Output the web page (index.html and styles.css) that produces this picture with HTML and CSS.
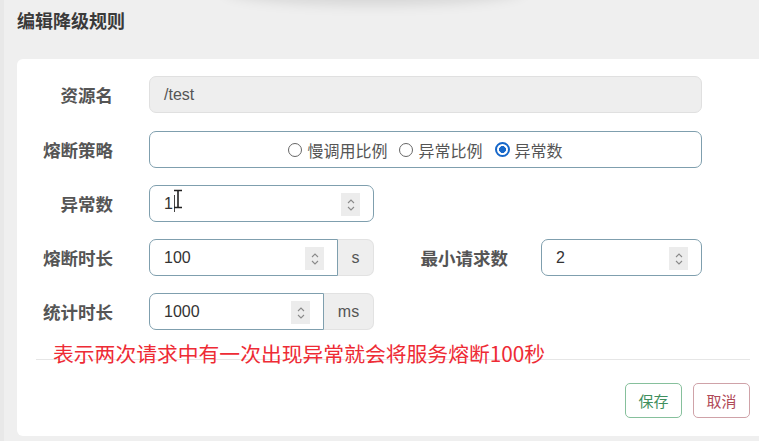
FILE: index.html
```html
<!DOCTYPE html>
<html lang="zh">
<head>
<meta charset="utf-8">
<link rel="stylesheet" href="styles.css">
</head>
<body>
<div class="page">
  <div class="topshade"></div>
  <h2 class="title">编辑降级规则</h2>
  <div class="card">
    <div class="form">
      <div class="row first">
        <label class="lbl">资源名</label>
        <div class="inp disabled full"><span class="val muted">/test</span></div>
      </div>
      <div class="row">
        <label class="lbl">熔断策略</label>
        <div class="inp full radios">
          <span class="radio"><span class="dot"></span>慢调用比例</span>
          <span class="radio"><span class="dot"></span>异常比例</span>
          <span class="radio on"><span class="dot"></span>异常数</span>
        </div>
      </div>
      <div class="row">
        <label class="lbl">异常数</label>
        <div class="inp half">
          <span class="val">1<span class="caret"></span></span>
          <svg class="ibeam" width="10" height="20" viewBox="0 0 10 20"><path d="M1 1.5h8M1 18.5h8M5 1.5v17" stroke="#222" stroke-width="1.6" fill="none"/></svg>
          <span class="spin"><svg width="10" height="16" viewBox="0 0 10 16"><path d="M2 6l3-3 3 3M2 10l3 3 3-3" stroke="#8a8a8a" stroke-width="1.1" fill="none"/></svg></span>
        </div>
      </div>
      <div class="row">
        <label class="lbl">熔断时长</label>
        <div class="group g-s">
          <div class="inp grp"><span class="val">100</span>
            <span class="spin"><svg width="10" height="16" viewBox="0 0 10 16"><path d="M2 6l3-3 3 3M2 10l3 3 3-3" stroke="#8a8a8a" stroke-width="1.1" fill="none"/></svg></span>
          </div>
          <div class="addon">s</div>
        </div>
        <label class="lbl lbl2">最小请求数</label>
        <div class="inp small"><span class="val">2</span>
          <span class="spin"><svg width="10" height="16" viewBox="0 0 10 16"><path d="M2 6l3-3 3 3M2 10l3 3 3-3" stroke="#8a8a8a" stroke-width="1.1" fill="none"/></svg></span>
        </div>
      </div>
      <div class="row">
        <label class="lbl">统计时长</label>
        <div class="group g-ms">
          <div class="inp grp"><span class="val">1000</span>
            <span class="spin"><svg width="10" height="16" viewBox="0 0 10 16"><path d="M2 6l3-3 3 3M2 10l3 3 3-3" stroke="#8a8a8a" stroke-width="1.1" fill="none"/></svg></span>
          </div>
          <div class="addon">ms</div>
        </div>
      </div>
    </div>
    <div class="footer">
      <button class="btn save">保存</button>
      <button class="btn cancel">取消</button>
    </div>
    <div class="note">表示两次请求中有一次出现异常就会将服务熔断100秒</div>
  </div>
</div>
</body>
</html>
```

FILE: styles.css
```css
html, body {
  margin: 0;
  padding: 0;
  background: #efefef;
  overflow: hidden;
  width: 759px;
  height: 441px;
}
body {
  font-family: "Noto Sans CJK SC", "Noto Sans", sans-serif;
  color: #333;
}
.page {
  position: relative;
  width: 759px;
  height: 441px;
  border-left: 4px solid #e8e8e8;
  box-sizing: border-box;
  overflow: hidden;
}
.topshade {
  position: absolute;
  left: 220px;
  top: -30px;
  width: 300px;
  height: 30px;
  border-radius: 50%;
  box-shadow: 0 4px 14px rgba(0,0,0,0.12);
}
.title {
  margin: 0;
  padding: 8px 0 0 13px;
  height: 51px;
  box-sizing: border-box;
  font-size: 18px;
  line-height: 24px;
  font-weight: bold;
  color: #3a3a3a;
}
.card {
  position: relative;
  margin-left: 13px;
  width: 760px;
  height: 377px;
  background: #fff;
  border-radius: 6px 0 0 6px;
  margin-top: 8px;
}
.form {
  padding-top: 17px;
}
.row {
  display: flex;
  align-items: center;
  height: 37px;
  margin-bottom: 17px;
}
.row.first { margin-bottom: 18px; }
.lbl {
  width: 96px;
  margin-right: 36px;
  text-align: right;
  font-size: 17.5px;
  font-weight: bold;
  color: #555;
  flex: none;
}
.lbl2 {
  width: 134px;
  margin-right: 33px;
}
.inp {
  position: relative;
  height: 37px;
  box-sizing: border-box;
  border: 1px solid #7f9fae;
  border-radius: 7px;
  background: #fff;
  display: flex;
  align-items: center;
  flex: none;
}
.inp.disabled {
  background: #eeeeee;
  border-color: #e0e0e0;
}
.full { width: 553px; }
.half { width: 225px; }
.small { width: 161px; }
.val {
  font-family: "Liberation Sans", Arial, sans-serif;
  font-size: 16px;
  color: #333;
  padding-left: 14px;
  position: relative;
}
.val.muted { color: #555; }
.caret {
  display: inline-block;
  width: 1px;
  height: 17px;
  background: #444;
  vertical-align: -3px;
  margin-left: 1px;
}
.ibeam {
  position: absolute;
  left: 23px;
  top: 3px;
}
.spin {
  position: absolute;
  right: 13px;
  top: 7px;
  width: 19px;
  height: 23px;
  background: #ececec;
  display: flex;
  align-items: center;
  justify-content: center;
}
.radios {
  justify-content: center;
  gap: 12px;
  font-size: 16px;
  color: #555;
}
.radio {
  display: flex;
  align-items: center;
}
.dot {
  width: 12px;
  height: 12px;
  border: 1.6px solid #666;
  border-radius: 50%;
  margin-right: 5px;
  box-sizing: content-box;
}
.radio.on .dot {
  border: 2.3px solid #1667c9;
  width: 11px;
  height: 11px;
  background: radial-gradient(circle, #1667c9 0 3.2px, #fff 3.7px);
}
.group {
  display: flex;
  flex: none;
  height: 37px;
}
.g-s { width: 225px; }
.g-ms { width: 225px; }
.inp.grp {
  border-radius: 7px 0 0 7px;
  flex: 1;
}
.addon {
  width: 36px;
  box-sizing: border-box;
  background: #eeeeee;
  border: 1px solid #e2e2e2;
  border-left: none;
  border-radius: 0 7px 7px 0;
  display: flex;
  align-items: center;
  justify-content: center;
  font-family: "Liberation Sans", Arial, sans-serif;
  font-size: 16px;
  color: #555;
  flex: none;
}
.g-ms .addon { width: 50px; }
.footer {
  margin: 29px 0 0 19px;
  width: 714px;
  border-top: 1px solid #e6e6e6;
  padding-top: 23px;
  display: flex;
  justify-content: flex-end;
  gap: 11px;
}
.btn {
  width: 57px;
  height: 35px;
  background: #fff;
  border-radius: 5px;
  font-family: "Noto Sans CJK SC", sans-serif;
  font-size: 15px;
  padding: 0;
  cursor: pointer;
}
.save {
  border: 1px solid #86c09c;
  color: #3f8f5e;
}
.cancel {
  border: 1px solid #cfa2a8;
  color: #b04a58;
}
.note {
  position: absolute;
  left: 36px;
  top: 281px;
  font-size: 20.8px;
  line-height: 26px;
  color: #ee2b35;
  white-space: nowrap;
}
```
